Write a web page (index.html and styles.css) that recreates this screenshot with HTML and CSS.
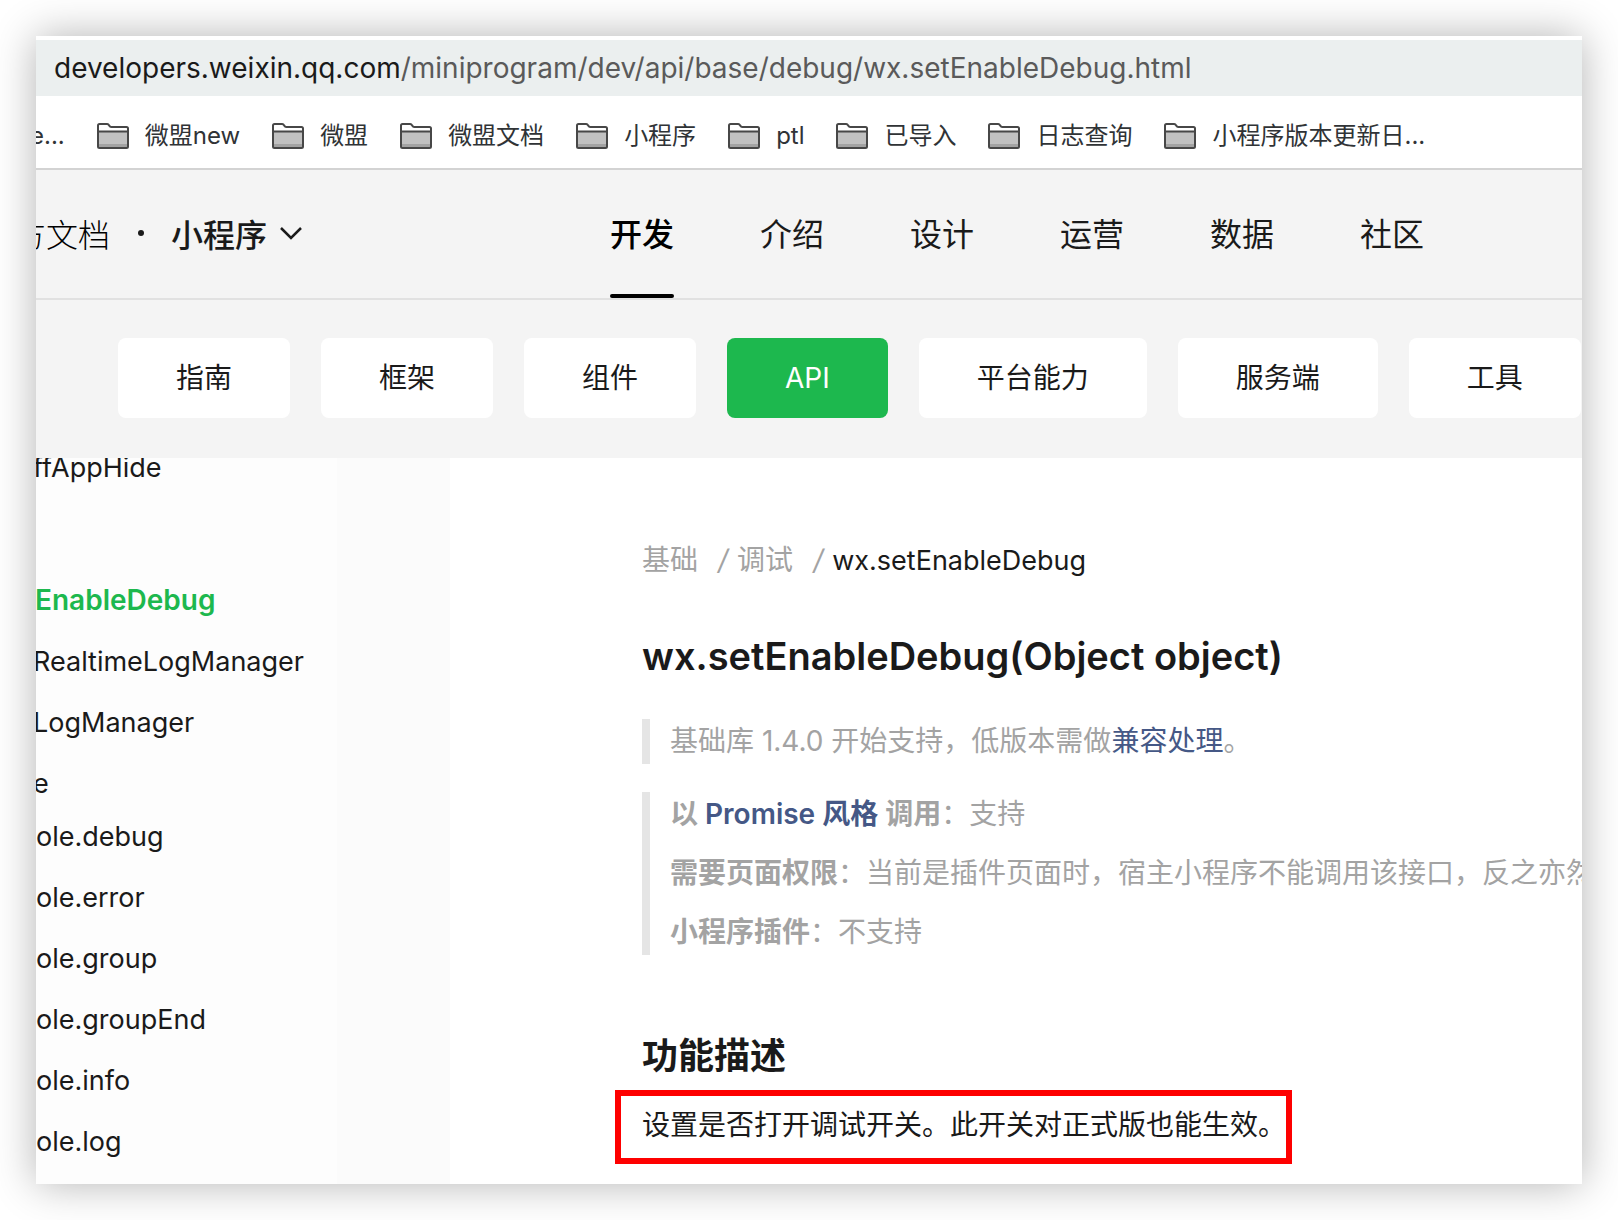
FILE: index.html
```html
<!DOCTYPE html>
<html lang="zh-CN">
<head>
    <meta charset="UTF-8">
    <meta name="viewport" content="width=device-width, initial-scale=1.0">
    <title>wx.setEnableDebug(Object object) | 微信开放文档</title>
    <link rel="stylesheet" href="styles.css">
</head>
<body>
    <svg class="sprite" aria-hidden="true">
        <symbol id="folder" viewBox="0 0 32 26">
            <path d="M1 24V2.5Q1 1 2.500 1H10.500L14 4H29.500Q31 4 31 5.500V23.500Q31 25 29.500 25H2.500Q1 25 1 23.500Z" fill="#fff"/>
            <path d="M1 9H31V24H1Z" fill="#c1c1c1"/>
            <path d="M1 21H31V24H1Z" fill="#a3a3a3"/>
            <path d="M1 8.500H31M1 23.500V2.500Q1 1 2.500 1H10Q11 1 11.500 1.700L13 3.500Q13.500 4 14.500 4H29.500Q31 4 31 5.500V23.500Q31 25 29.500 25H2.500Q1 25 1 23.500Z" fill="none" stroke="#474747" stroke-width="2"/>
        </symbol>
    </svg>
    <div class="window">
        <div class="address">developers.weixin.qq.com<span>/miniprogram/dev/api/base/debug/wx.setEnableDebug.html</span></div>
        <nav class="bookmarks">
            <a href="#" class="cut">e...</a>
            <a href="#"><svg><use href="#folder"/></svg>微盟new</a>
            <a href="#"><svg><use href="#folder"/></svg>微盟</a>
            <a href="#"><svg><use href="#folder"/></svg>微盟文档</a>
            <a href="#"><svg><use href="#folder"/></svg>小程序</a>
            <a href="#"><svg><use href="#folder"/></svg>ptl</a>
            <a href="#"><svg><use href="#folder"/></svg>已导入</a>
            <a href="#"><svg><use href="#folder"/></svg>日志查询</a>
            <a href="#"><svg><use href="#folder"/></svg>小程序版本更新日...</a>
        </nav>
        <header class="header">
            <div class="brand">
                <a href="#" class="brand-name">方文档</a>
                <span class="dot"></span>
                <button type="button" class="product">小程序
                    <svg viewBox="0 0 24 16"><path d="M2 3L12 13L22 3" fill="none" stroke="#1a1a1a" stroke-width="2.500"/></svg>
                </button>
            </div>
            <nav class="tabs">
                <a href="#" class="active">开发</a>
                <a href="#">介绍</a>
                <a href="#">设计</a>
                <a href="#">运营</a>
                <a href="#">数据</a>
                <a href="#">社区</a>
            </nav>
        </header>
        <nav class="subnav">
            <a href="#">指南</a>
            <a href="#">框架</a>
            <a href="#">组件</a>
            <a href="#" class="active">API</a>
            <a href="#">平台能力</a>
            <a href="#">服务端</a>
            <a href="#">工具</a>
        </nav>
        <div class="content">
            <aside class="sidebar">
                <ul class="menu">
                    <li class="last"><a href="#">ffAppHide</a></li>
                    <li class="active"><a href="#">EnableDebug</a></li>
                    <li><a href="#">RealtimeLogManager</a></li>
                    <li><a href="#">LogManager</a></li>
                    <li><a href="#">e</a></li>
                </ul>
                <ul class="menu sub">
                    <li><a href="#">ole.debug</a></li>
                    <li><a href="#">ole.error</a></li>
                    <li><a href="#">ole.group</a></li>
                    <li><a href="#">ole.groupEnd</a></li>
                    <li><a href="#">ole.info</a></li>
                    <li><a href="#">ole.log</a></li>
                </ul>
            </aside>
            <main class="doc">
                <div class="breadcrumb">
                    <a href="#">基础</a><i>/</i><a href="#">调试</a><i>/</i><span>wx.setEnableDebug</span>
                </div>
                <h1>wx.setEnableDebug(Object object)</h1>
                <blockquote>
                    <p>基础库 1.4.0 开始支持，低版本需做<a href="#">兼容处理</a>。</p>
                </blockquote>
                <blockquote>
                    <p><strong>以 <a href="#">Promise 风格</a> 调用</strong>：支持</p>
                    <p><strong>需要页面权限</strong>：当前是插件页面时，宿主小程序不能调用该接口，反之亦然</p>
                    <p><strong>小程序插件</strong>：不支持</p>
                </blockquote>
                <h2>功能描述</h2>
                <p class="marked">设置是否打开调试开关。此开关对正式版也能生效。</p>
            </main>
        </div>
    </div>
</body>
</html>
```

FILE: styles.css
```css
* {
    box-sizing: border-box;
}
body {
    margin: 0;
    padding: 36px;
    min-height: 100vh;
    display: flex;
    background-color: #fff;
    color: #1a1a1a;
    font-family: Inter, "Noto Sans CJK SC", sans-serif;
    font-size: 28px;
    font-variant-ligatures: none;
}
a {
    color: inherit;
    text-decoration: none;
}
ul {
    list-style: none;
    margin: 0;
    padding: 0;
}
.sprite {
    display: none;
}
.window {
    flex: 1;
    min-width: 0;
    display: flex;
    flex-direction: column;
    padding-top: 4px;
    overflow: hidden;
    white-space: nowrap;
    background-color: #fff;
    box-shadow: 0 0 40px rgba(0, 0, 0, 0.3);
}

/* browser bars */
.address {
    padding: 0 18px;
    line-height: 56px;
    background-color: #ebefef;
}
.address span {
    color: #5a5a5a;
}
.bookmarks {
    display: flex;
    align-items: center;
    gap: 32px;
    height: 74px;
    padding-top: 8px;
    border-bottom: 2px solid #d3d3d3;
    font-size: 24px;
    color: #303336;
}
.bookmarks a {
    display: flex;
    align-items: center;
    gap: 16px;
    line-height: 40px;
}
.bookmarks .cut {
    margin-left: -6px;
}
.bookmarks svg {
    width: 32px;
    height: 26px;
}

/* site header */
.header {
    display: flex;
    height: 130px;
    background-color: #f4f4f4;
    border-bottom: 2px solid #e1e1e1;
    font-size: 32px;
}
.brand {
    display: flex;
    align-items: center;
    width: 574px;
    flex-shrink: 0;
    margin-left: -22px;
    padding-bottom: 2px;
}
.brand-name {
    font-weight: 300;
    color: #000;
}
.dot {
    width: 6px;
    height: 6px;
    margin: 0 27px 0 28px;
    border-radius: 50%;
    background-color: #1a1a1a;
}
.product {
    display: flex;
    align-items: center;
    gap: 12px;
    padding: 0;
    border: 0;
    background: none;
    color: inherit;
    font: inherit;
    font-weight: 500;
}
.product svg {
    width: 24px;
    height: 16px;
}
.tabs {
    display: flex;
    gap: 86px;
    margin-left: 22px;
}
.tabs a {
    display: flex;
    flex-direction: column;
    padding-top: 6px;
    line-height: 118px;
}
.tabs .active {
    font-weight: 500;
    color: #000;
}
.tabs .active::after {
    content: "";
    height: 4px;
    border-radius: 2px;
    background-color: #000;
}
.subnav {
    display: flex;
    gap: 31px;
    padding: 38px 0 40px 82px;
    background-color: #f4f4f4;
}
.subnav a {
    padding: 0 58px;
    line-height: 80px;
    border-radius: 8px;
    background-color: #fff;
}
.subnav .active {
    background-color: #1db84e;
    color: #fff;
}

/* page body */
.content {
    flex: 1;
    display: flex;
}
.sidebar {
    width: 414px;
    flex-shrink: 0;
    overflow: hidden;
    background: linear-gradient(to right, #fdfdfd 301px, #fbfbfb 301px);
}
.menu {
    margin-left: -3px;
    margin-top: -21px;
    font-size: 27px;
    line-height: 61px;
}
.menu .last {
    margin-bottom: 72px;
}
.menu .active {
    margin-left: 2px;
    font-size: 28px;
    font-weight: 600;
    color: #1db84e;
}
.menu.sub {
    margin-left: 0;
    margin-top: -8px;
}
.doc {
    flex: 1;
    min-width: 0;
    padding: 80px 0 16px 192px;
}
.breadcrumb {
    line-height: 44px;
    color: #a3a3a3;
}
.breadcrumb i {
    margin: 0 9px 0 20px;
}
.breadcrumb span {
    color: #1a1a1a;
    font-size: 27px;
}
h1 {
    margin: 45px 0 35px;
    font-size: 38px;
    font-weight: 600;
    line-height: 56px;
}
blockquote {
    margin: 0 0 28px;
    padding-left: 20px;
    border-left: 8px solid #e5e5e5;
    color: #a3a3a3;
}
blockquote p {
    margin: 0;
    line-height: 45px;
}
blockquote p + p {
    margin-top: 14px;
}
blockquote strong {
    font-weight: 600;
}
blockquote a {
    color: #455886;
}
h2 {
    margin: 75px 0 8px;
    font-size: 36px;
    font-weight: 600;
    line-height: 52px;
}
.marked {
    width: fit-content;
    margin: 0 0 0 -27px;
    padding: 7px 0 11px 21px;
    border: 6px solid #fe0000;
    line-height: 44px;
}
```
